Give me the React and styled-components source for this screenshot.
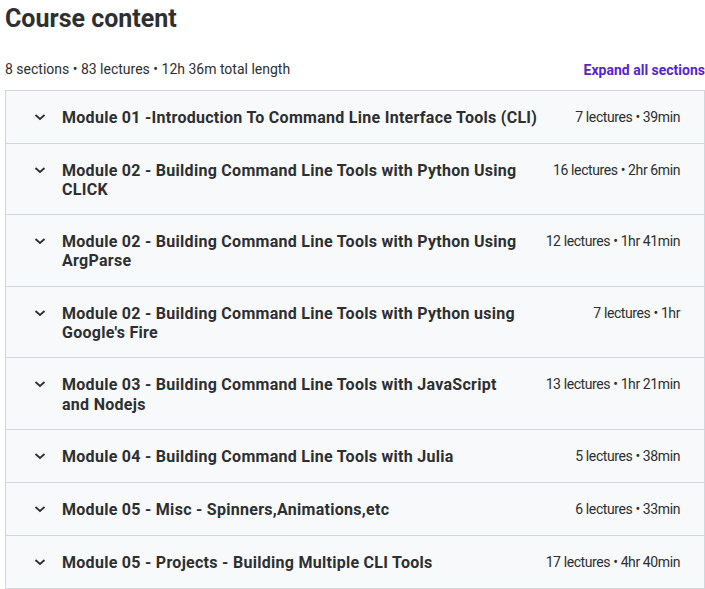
import styled, { createGlobalStyle } from 'styled-components';

const GlobalStyle = createGlobalStyle`
    body {
        margin: 0;
        background: #fff;
        font-family: Roboto, "Liberation Sans", sans-serif;
        color: #2d2f31;
    }
`;

const Page = styled.div`
    padding: 0 0 0 5px;
    width: 700px;
`;

const Title = styled.h2`
    margin: 0;
    padding-top: 4px;
    font-size: 25px;
    line-height: 29px;
    font-weight: 700;
    color: #2d2f31;
`;

const SummaryRow = styled.div`
    display: flex;
    justify-content: space-between;
    align-items: center;
    margin-top: 27px;
    margin-bottom: 10px;
    font-size: 14px;
    line-height: 1.4;
`;

const ExpandButton = styled.button`
    border: 0;
    background: none;
    padding: 0;
    font-family: inherit;
    font-size: 14px;
    font-weight: 700;
    color: #5624d0;
    cursor: pointer;
`;

const Sections = styled.div`
    border: 1px solid #d1d7dc;
    border-bottom: 0;
`;

const SectionHeader = styled.div`
    display: flex;
    align-items: flex-start;
    padding: 17px 24px 15px;
    background: #f7f9fa;
    border-bottom: 1px solid #d1d7dc;
    cursor: pointer;
`;

const Chevron = styled.svg`
    flex-shrink: 0;
    width: 20px;
    height: 19px;
    margin-right: 12px;
`;

const SectionTitle = styled.span`
    flex: 1;
    min-height: 20px;
    font-size: 16px;
    font-weight: 700;
    line-height: 19.3px;
    letter-spacing: 0.28px;
`;

const SectionMeta = styled.span`
    flex-shrink: 0;
    margin-left: 24px;
    font-size: 14px;
    line-height: 19px;
    letter-spacing: -0.4px;
    white-space: nowrap;
`;

const sections = [
    ['Module 01 -Introduction To Command Line Interface Tools (CLI)', 7, '39min'],
    ['Module 02 - Building Command Line Tools with Python Using CLICK', 16, '2hr 6min'],
    ['Module 02 - Building Command Line Tools with Python Using ArgParse', 12, '1hr 41min'],
    ["Module 02 - Building Command Line Tools with Python using Google's Fire", 7, '1hr'],
    ['Module 03 - Building Command Line Tools with JavaScript and Nodejs', 13, '1hr 21min'],
    ['Module 04 - Building Command Line Tools with Julia', 5, '38min'],
    ['Module 05 - Misc - Spinners,Animations,etc', 6, '33min'],
    ['Module 05 - Projects - Building Multiple CLI Tools', 17, '4hr 40min'],
];

function ChevronIcon() {
    return (
        <Chevron viewBox="0 0 20 19">
            <path d="M5.5 7 10 11l4.5-4" fill="none" stroke="#2d2f31" strokeWidth="1.8" />
        </Chevron>
    );
}

export default function App() {
    return (
        <Page>
            <GlobalStyle />
            <Title>Course content</Title>
            <SummaryRow>
                <span>8 sections • 83 lectures • 12h 36m total length</span>
                <ExpandButton>Expand all sections</ExpandButton>
            </SummaryRow>
            <Sections>
                {sections.map(([title, lectures, length], i) => (
                    <SectionHeader key={i}>
                        <ChevronIcon />
                        <SectionTitle>{title}</SectionTitle>
                        <SectionMeta>
                            {lectures} lectures • {length}
                        </SectionMeta>
                    </SectionHeader>
                ))}
            </Sections>
        </Page>
    );
}
